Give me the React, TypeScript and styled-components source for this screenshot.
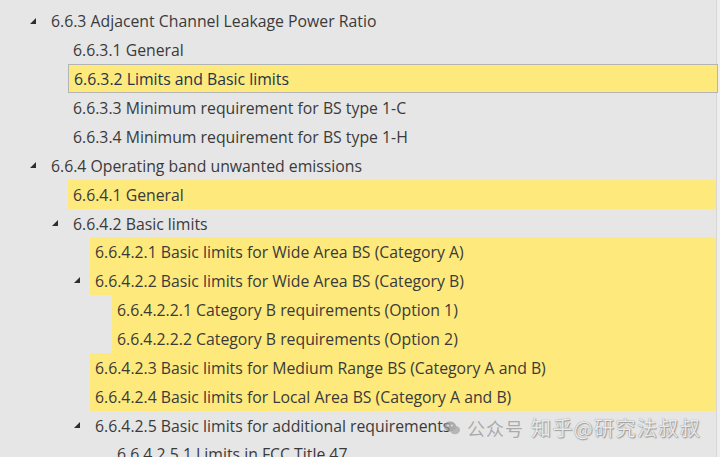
import React from "react";
import styled, { createGlobalStyle } from "styled-components";

const Global = createGlobalStyle`
  html, body { margin: 0; padding: 0; background: #e6e6e6; overflow: hidden; }
  body { font-family: "Open Sans", "Noto Sans", "Noto Sans CJK SC", sans-serif; }
`;

const Page = styled.div`
  position: relative;
  width: 720px;
  height: 457px;
  overflow: hidden;
  display: flex;
  background: #e6e6e6;
`;

const Tree = styled.div`
  flex: 1;
  display: flex;
  flex-direction: column;
  margin-top: -22.3px;
`;

const ScrollTrack = styled.div`
  width: 3px;
  background: #eeeeee;
  border-left: 1px solid #d6d6d6;
`;

const Row = styled.div<{ $level: number }>`
  display: flex;
  align-items: stretch;
  height: 28.86px;
  flex-shrink: 0;
  padding-left: ${(p) => 24 + 22 * (p.$level - 1)}px;
`;

const Toggle = styled.div`
  width: 22px;
  flex-shrink: 0;
  position: relative;
`;

const Arrow = styled.span`
  position: absolute;
  left: 6px;
  top: 11px;
  width: 0;
  height: 0;
  border-left: 6px solid transparent;
  border-bottom: 6px solid #2e2e2e;
`;

const Label = styled.div<{ $hl: boolean; $sel: boolean; $lift: number }>`
  flex: 1;
  display: flex;
  align-items: center;
  padding-left: 5px;
  box-sizing: border-box;
  font-size: 15.8px;
  white-space: nowrap;
  color: ${(p) => (p.$sel ? "#24344e" : "#3a3a3a")};
  background: ${(p) => (p.$hl || p.$sel ? "#fee97c" : "transparent")};
  border: ${(p) => (p.$sel ? "1px solid #b4b4b4" : "none")};
  margin-right: ${(p) => (p.$sel ? "-2px" : "0")};
  padding-top: 1px;
  transform: translateY(${(p) => -p.$lift}px);
`;

const Watermark = styled.div`
  position: absolute;
  left: 444px;
  top: 413px;
  display: flex;
  align-items: center;
  gap: 7px;
  font-family: "Noto Sans CJK SC", sans-serif;
  pointer-events: none;
`;

const WmGray = styled.span`
  font-size: 18px;
  color: rgba(150, 150, 150, 0.75);
  letter-spacing: 1px;
`;

const WmWhite = styled.span`
  font-size: 20px;
  color: rgba(255, 255, 255, 0.85);
  text-shadow: 0 0 1px rgba(90, 90, 90, 0.8), 1px 1px 1px rgba(120, 120, 120, 0.6);
  letter-spacing: 1.4px;
`;

type Item = { level: number; text: string; exp?: boolean; hl?: boolean; sel?: boolean; lift?: number };

const items: Item[] = [
  { level: 2, text: "6.6.2.4 Requirements", lift: 4 },
  { level: 1, text: "6.6.3 Adjacent Channel Leakage Power Ratio", exp: true },
  { level: 2, text: "6.6.3.1 General" },
  { level: 2, text: "6.6.3.2 Limits and Basic limits", sel: true },
  { level: 2, text: "6.6.3.3 Minimum requirement for BS type 1-C" },
  { level: 2, text: "6.6.3.4 Minimum requirement for BS type 1-H" },
  { level: 1, text: "6.6.4 Operating band unwanted emissions", exp: true },
  { level: 2, text: "6.6.4.1 General", hl: true },
  { level: 2, text: "6.6.4.2 Basic limits", exp: true },
  { level: 3, text: "6.6.4.2.1 Basic limits for Wide Area BS (Category A)", hl: true },
  { level: 3, text: "6.6.4.2.2 Basic limits for Wide Area BS (Category B)", exp: true, hl: true },
  { level: 4, text: "6.6.4.2.2.1 Category B requirements (Option 1)", hl: true },
  { level: 4, text: "6.6.4.2.2.2 Category B requirements (Option 2)", hl: true },
  { level: 3, text: "6.6.4.2.3 Basic limits for Medium Range BS (Category A and B)", hl: true },
  { level: 3, text: "6.6.4.2.4 Basic limits for Local Area BS (Category A and B)", hl: true },
  { level: 3, text: "6.6.4.2.5 Basic limits for additional requirements", exp: true },
  { level: 4, text: "6.6.4.2.5.1 Limits in FCC Title 47" },
];

const WeChatIcon = () => (
  <svg width="16" height="14" viewBox="0 0 16 14">
    <ellipse cx="6" cy="5.5" rx="6" ry="5" fill="rgba(150,150,150,0.75)" />
    <ellipse cx="11" cy="9" rx="5" ry="4.2" fill="rgba(170,170,170,0.8)" />
    <circle cx="4" cy="4.5" r="0.9" fill="#e6e6e6" />
    <circle cx="8" cy="4.5" r="0.9" fill="#e6e6e6" />
  </svg>
);

export default function App() {
  return (
    <Page>
      <Global />
      <Tree>
        {items.map((it, i) => (
          <Row key={i} $level={it.level}>
            <Toggle>{it.exp && <Arrow />}</Toggle>
            <Label $hl={!!it.hl} $sel={!!it.sel} $lift={it.lift ?? 0}>
              {it.text}
            </Label>
          </Row>
        ))}
      </Tree>
      <ScrollTrack />
      <Watermark>
        <WeChatIcon />
        <WmGray>公众号</WmGray>
        <WmWhite>知乎@研究法叔叔</WmWhite>
      </Watermark>
    </Page>
  );
}
